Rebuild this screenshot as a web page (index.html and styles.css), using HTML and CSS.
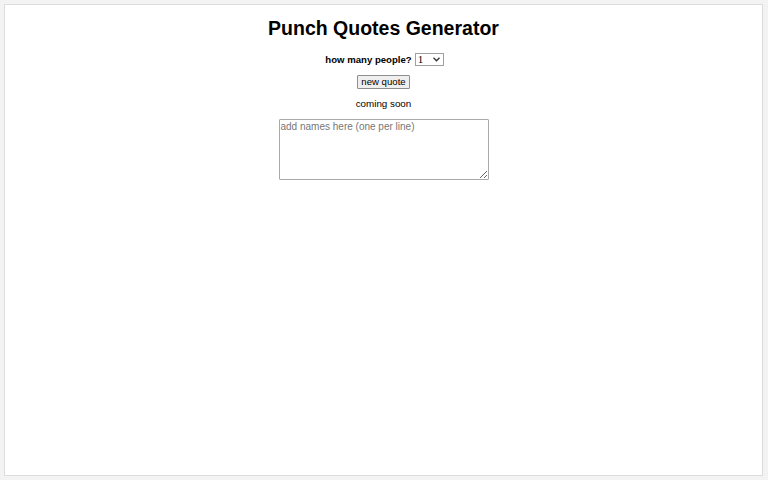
FILE: index.html
```html
<!DOCTYPE html>
<html>
<head>
<meta charset="utf-8">
<title>Punch Quotes Generator</title>
<link rel="stylesheet" href="styles.css">
</head>
<body>
<main class="page">
  <h1 class="title">Punch Quotes Generator</h1>
  <div class="row people">
    <label class="label" for="count">how many people?</label>
    <span class="select-wrap">
      <select id="count" class="count">
        <option>1</option><option>2</option><option>3</option><option>4</option>
      </select>
      <svg class="chevron" width="7" height="5" viewBox="0 0 7 5"><path d="M0.5 0.8 L3.5 3.8 L6.5 0.8" fill="none" stroke="#333" stroke-width="1.3"/></svg>
    </span>
  </div>
  <div class="row">
    <button class="btn">new quote</button>
  </div>
  <p class="quote">coming soon</p>
  <div class="row">
    <textarea class="names" placeholder="add names here (one per line)"></textarea>
  </div>
</main>
</body>
</html>
```
FILE: styles.css
```css
html, body {
  margin: 0;
  padding: 0;
  background: #f3f3f3;
}
body {
  padding: 4px 5px 4px 4px;
  font-family: "Liberation Sans", Arial, sans-serif;
  font-size: 10px;
  color: #000;
}
.page {
  box-sizing: border-box;
  height: 472px;
  background: #fff;
  border: 1px solid #dcdcdc;
  display: flex;
  flex-direction: column;
  align-items: center;
}
.title {
  margin: 11px 0 0;
  font-size: 19.5px;
  font-weight: bold;
  line-height: 24px;
}
.row {
  display: flex;
  align-items: center;
  justify-content: center;
}
.people { margin-top: 13px; padding-left: 2px; }
.label {
  font-weight: bold;
  font-size: 9.6px;
  margin-right: 3px;
}
.select-wrap {
  position: relative;
  display: inline-block;
}
.count {
  appearance: none;
  -webkit-appearance: none;
  display: block;
  box-sizing: border-box;
  font-family: "Liberation Serif", serif;
  font-size: 11px;
  line-height: 11px;
  width: 29px;
  height: 13px;
  padding: 0 0 0 2px;
  border: 1px solid #a0a0a0;
  border-radius: 0;
  background: #fff;
  color: #000;
}
.chevron {
  position: absolute;
  right: 4px;
  top: 4px;
  pointer-events: none;
}
.btn {
  margin-top: 9px;
  box-sizing: border-box;
  height: 14px;
  font-family: "Liberation Sans", Arial, sans-serif;
  font-size: 9.6px;
  line-height: 10px;
  padding: 0 3px;
  border: 1px solid #8f8f8f;
  border-radius: 1px;
  background: #efefef;
  color: #000;
}
.quote {
  margin: 9px 0 0;
  font-size: 9.8px;
  line-height: 12px;
}
.names {
  margin-top: 9px;
  width: 210px;
  height: 61px;
  box-sizing: border-box;
  font-family: "Liberation Sans", Arial, sans-serif;
  font-size: 10px;
  padding: 1px;
  border: 1px solid #a9a9a9;
  border-radius: 1px;
}
.names::placeholder {
  color: #777;
}
```
